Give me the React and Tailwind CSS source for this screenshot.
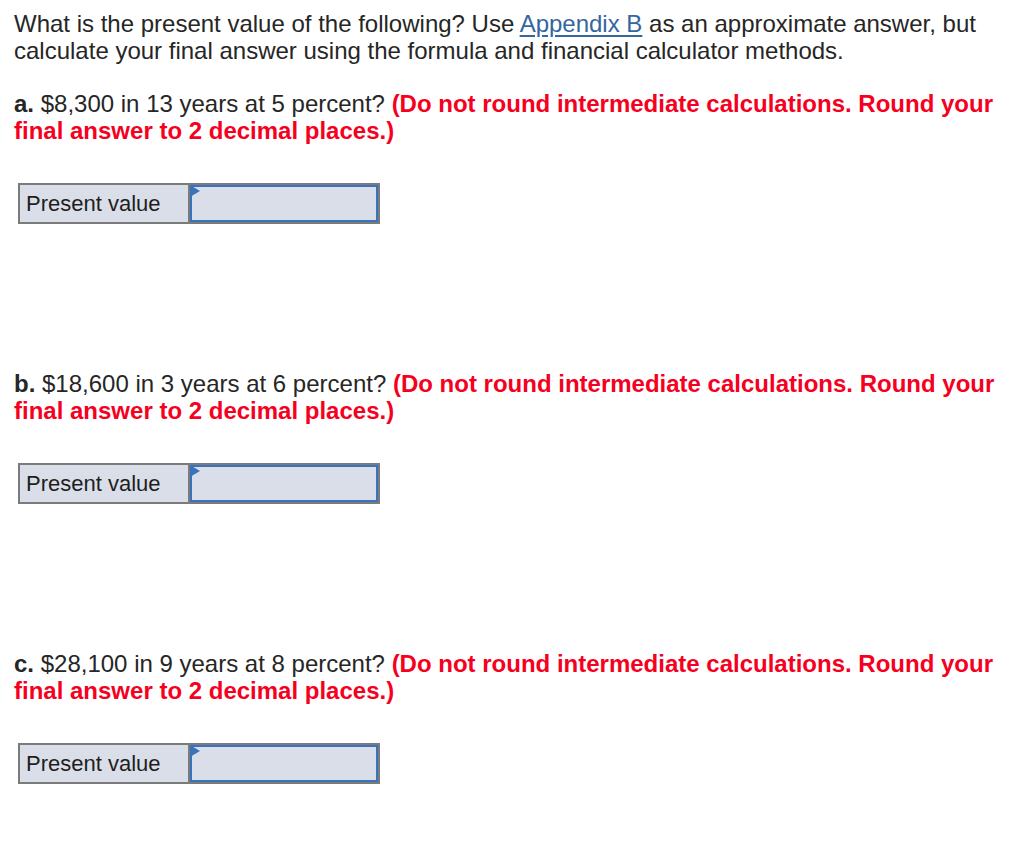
import React from "react";

function AnswerBox() {
  return (
    <div className="flex w-[362px] h-[41px] border-2 border-[#7b7b7b] bg-[#dadee8]">
      <div className="w-[170px] border-r-2 border-[#7b7b7b] pl-[6px] flex items-center text-[22px] leading-none text-[#1e1e1e] pt-[1px]">
        Present value
      </div>
      <div className="relative flex-1 border-2 border-[#3a72bb] bg-[#dadee8]">
        <div className="absolute left-[-2px] top-[-2px] w-0 h-0 border-l-[10px] border-l-[#3a72bb] border-y-[6px] border-y-transparent" />
      </div>
    </div>
  );
}

function Part({ letter, text }) {
  return (
    <div>
      <p className="m-0">
        <span className="font-bold">{letter}.</span> {text}{" "}
        <span className="font-bold text-[#f5001e]">
          (Do not round intermediate calculations. Round your final answer to 2 decimal places.)
        </span>
      </p>
      <div className="mt-[39px] ml-[4px]">
        <AnswerBox />
      </div>
    </div>
  );
}

export default function App() {
  return (
    <div
      className="bg-white w-[1024px] h-[846px] text-[24px] leading-[27px] text-[#262626] pl-[14px] pr-[10px] pt-[10px]"
      style={{ fontFamily: '"Liberation Sans", Arial, sans-serif' }}
    >
      <p className="m-0">
        What is the present value of the following? Use{" "}
        <span className="text-[#3466a0] underline underline-offset-[3px]">Appendix B</span> as an
        approximate answer, but calculate your final answer using the formula and financial
        calculator methods.
      </p>
      <div className="mt-[26px] flex flex-col gap-[146px]">
        <Part letter="a" text="$8,300 in 13 years at 5 percent?" />
        <Part letter="b" text="$18,600 in 3 years at 6 percent?" />
        <Part letter="c" text="$28,100 in 9 years at 8 percent?" />
      </div>
    </div>
  );
}
